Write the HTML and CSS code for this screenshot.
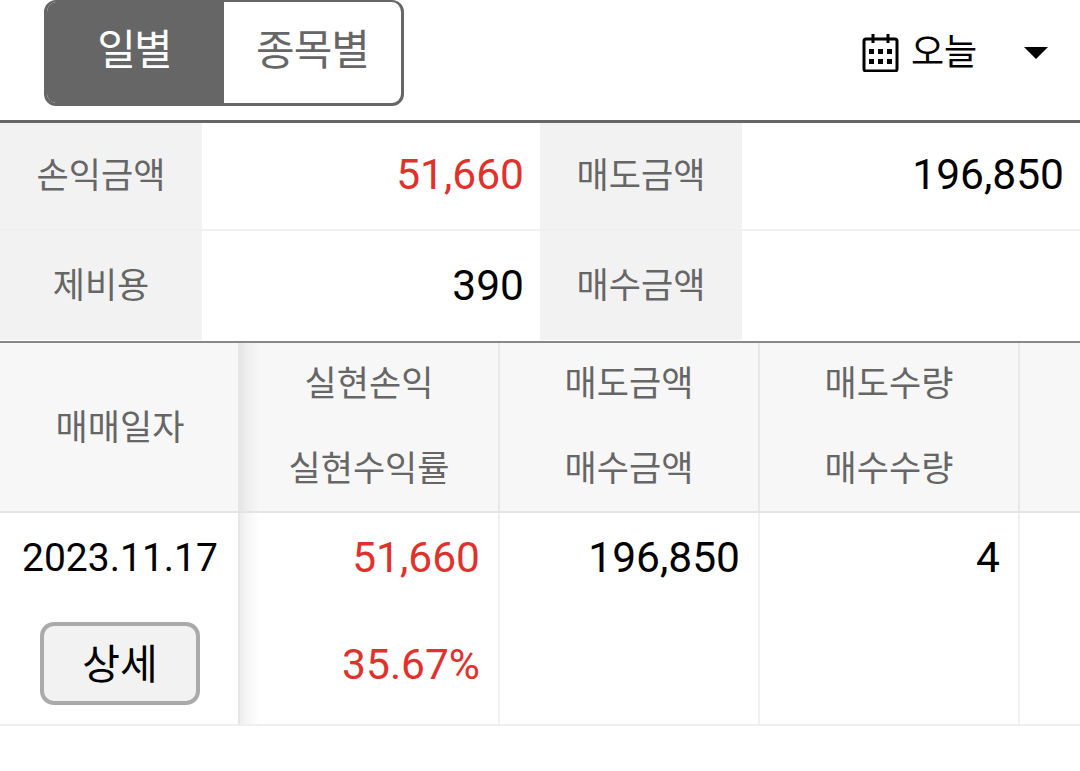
FILE: index.html
```html
<!DOCTYPE html>
<html lang="ko">
<head>
    <meta charset="UTF-8">
    <meta name="viewport" content="width=device-width, initial-scale=1.0">
    <title>매매일지</title>
    <link rel="stylesheet" href="styles.css">
</head>
<body>
    <div class="topbar">
        <div class="tabs">
            <div class="tab active">일별</div>
            <div class="tab">종목별</div>
        </div>
        <div class="period">
            <svg class="cal-icon" width="38" height="38" viewBox="0 0 38 38">
                <rect x="2" y="5" width="33" height="32" rx="2" fill="none" stroke="#000" stroke-width="3"/>
                <path d="M11 0v9M26 0v9" stroke="#000" stroke-width="3"/>
                <g fill="#000">
                    <rect x="7" y="15" width="5" height="5"/>
                    <rect x="16" y="15" width="5" height="5"/>
                    <rect x="25" y="15" width="5" height="5"/>
                    <rect x="7" y="25" width="5" height="5"/>
                    <rect x="16" y="25" width="5" height="5"/>
                    <rect x="25" y="25" width="5" height="5"/>
                </g>
            </svg>
            <span class="period-text">오늘</span>
            <span class="caret"></span>
        </div>
    </div>

    <div class="summary">
        <div class="s-label">손익금액</div>
        <div class="s-value red">51,660</div>
        <div class="s-label">매도금액</div>
        <div class="s-value">196,850</div>
        <div class="s-label">제비용</div>
        <div class="s-value">390</div>
        <div class="s-label">매수금액</div>
        <div class="s-value"></div>
    </div>

    <div class="list">
        <div class="list-head">
            <div class="col-date head-date">매매일자</div>
            <div class="col col-first head-col"><span>실현손익</span><span>실현수익률</span></div>
            <div class="col head-col"><span>매도금액</span><span>매수금액</span></div>
            <div class="col head-col"><span>매도수량</span><span>매수수량</span></div>
            <div class="col col-last"></div>
        </div>
        <div class="list-row">
            <div class="col-date row-date">
                <span>2023.11.17</span>
                <button class="detail-btn">상세</button>
            </div>
            <div class="col col-first row-col red"><span>51,660</span><span>35.67%</span></div>
            <div class="col row-col"><span>196,850</span></div>
            <div class="col row-col"><span>4</span></div>
            <div class="col col-last"></div>
        </div>
    </div>
</body>
</html>
```

FILE: styles.css
```css
* {
    box-sizing: border-box;
}

body {
    margin: 0;
    height: 771px;
    overflow: hidden;
    background-color: #fff;
    color: #000;
    font-family: 'Roboto', 'Noto Sans CJK KR', sans-serif;
}

.red {
    color: #e0322d;
}

.topbar {
    display: flex;
    justify-content: space-between;
    height: 123px;
    padding: 0 32px 0 44px;
    border-bottom: 3px solid #666;
}

.tabs {
    display: flex;
    width: 360px;
    height: 106px;
    border: 3px solid #666;
    border-top-width: 2px;
    border-radius: 12px;
    overflow: hidden;
    font-size: 42px;
    color: #666;
}

.tab {
    display: flex;
    align-items: center;
    justify-content: center;
    flex: 1;
    padding-bottom: 12px;
    letter-spacing: -1px;
}

.tab.active {
    flex: none;
    width: 177px;
    padding-right: 3px;
    letter-spacing: -2px;
    background-color: #666;
    color: #fff;
}

.period {
    display: flex;
    align-items: center;
    height: 106px;
}

.cal-icon {
    margin-right: 11px;
}

.period-text {
    width: 113px;
    font-size: 36px;
    padding-bottom: 8px;
}

.caret {
    width: 0;
    height: 0;
    border-left: 12px solid transparent;
    border-right: 12px solid transparent;
    border-top: 12px solid #000;
}

.summary {
    display: grid;
    grid-template-columns: 202px 338px 202px 338px;
    grid-template-rows: 108px 109px;
    height: 220px;
    border-bottom: 2px solid #888;
}

.s-label {
    display: flex;
    align-items: center;
    justify-content: center;
    padding-bottom: 8px;
    background-color: #f2f2f2;
    border-bottom: 2px solid #f0f0f0;
    color: #666;
    font-size: 35px;
}

.s-value {
    display: flex;
    align-items: center;
    justify-content: flex-end;
    padding-right: 16px;
    padding-bottom: 4px;
    border-bottom: 2px solid #f0f0f0;
    font-size: 42.5px;
}

.s-label:nth-child(n+5),
.s-value:nth-child(n+5) {
    border-bottom: 0;
}

.s-value:nth-child(n+5) {
    padding-bottom: 0;
}

.s-label:nth-child(n+5) {
    padding-bottom: 6px;
}

.list-head,
.list-row {
    display: flex;
}

.list-head {
    height: 170px;
    background-color: #f7f7f7;
    border-bottom: 2px solid #e4e4e4;
    color: #666;
    font-size: 35px;
}

.list-row {
    height: 213px;
    border-bottom: 2px solid #efefef;
    font-size: 42.5px;
}

.col-date {
    display: flex;
    flex-direction: column;
    align-items: center;
    flex: none;
    width: 240px;
    padding-left: 2px;
    border-right: 2px solid #e6e6e6;
}

.head-date {
    justify-content: center;
    padding-bottom: 6px;
}

.row-date {
    font-size: 39px;
    padding-top: 22px;
}

.detail-btn {
    width: 160px;
    height: 83px;
    margin-top: 41px;
    padding: 0 0 6px;
    background-color: #f2f2f2;
    border: 4px solid #aaa;
    border-radius: 14px;
    color: #000;
    font-family: inherit;
    font-size: 41px;
}

.col {
    flex: none;
    width: 260px;
    border-right: 2px solid #e8e8e8;
}

.col-first {
    background-image: linear-gradient(to right, rgba(0, 0, 0, 0.07), rgba(0, 0, 0, 0.04) 6px, rgba(0, 0, 0, 0) 20px);
}

.col-last {
    width: 60px;
    border-right: 0;
}

.head-col {
    display: flex;
    flex-direction: column;
    align-items: center;
    gap: 33px;
    padding-top: 16px;
}

.head-col span {
    line-height: 52px;
}

.row-col {
    display: flex;
    flex-direction: column;
    align-items: flex-end;
    gap: 57px;
    padding: 20px 18px 0 0;
    border-right-color: #f0f0f0;
}

.row-col span {
    line-height: 50px;
}
```
